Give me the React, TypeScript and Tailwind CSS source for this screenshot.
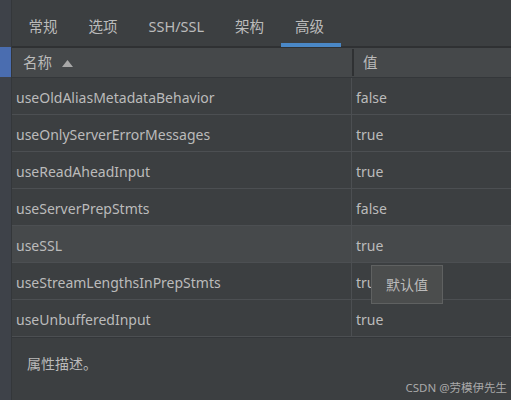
import React from "react";

const rows: [string, string][] = [
  ["useOldAliasMetadataBehavior", "false"],
  ["useOnlyServerErrorMessages", "true"],
  ["useReadAheadInput", "true"],
  ["useServerPrepStmts", "false"],
  ["useSSL", "true"],
  ["useStreamLengthsInPrepStmts", "true"],
  ["useUnbufferedInput", "true"],
];

const tabs = ["常规", "选项", "SSH/SSL", "架构", "高级"];

const font = { fontFamily: '"Noto Sans", "Noto Sans CJK SC", sans-serif' };

export default function App() {
  return (
    <div
      className="w-[511px] h-[400px] flex bg-[#3c3f41] text-[#bbbbbb] overflow-hidden"
      style={font}
    >
      <div className="w-[11px] shrink-0 bg-[#3e4249] flex flex-col">
        <div className="h-[47px]" />
        <div className="h-[30px] bg-[#4a6db0]" />
      </div>
      <div className="flex-1 flex flex-col border-l border-[#34373a] relative">
        <div className="h-[46px] flex items-stretch pl-[1px]">
          {tabs.map((t, i) => (
            <div
              key={t}
              className="px-[15.5px] flex items-center text-[14.5px] relative"
            >
              <span className="mt-[8px]">{t}</span>
              {i === 4 && (
                <div className="absolute left-[1px] right-[-1px] bottom-[-1px] h-[4px] bg-[#4a88c7]" />
              )}
            </div>
          ))}
        </div>
        <div className="h-[2px] bg-[#2f3133]" />
        <div className="h-[30px] flex bg-[#45484a] border-b border-[#34373a]">
          <div className="w-[340px] flex items-center pl-[11px] pt-[1px] gap-[10px] text-[14.5px]">
            <span>名称</span>
            <svg width="11" height="7" viewBox="0 0 11 7">
              <polygon points="5.5,0 11,7 0,7" fill="#a8a8a8" />
            </svg>
          </div>
          <div className="w-[2px] my-[1px] bg-[#2f3133]" />
          <div className="flex-1 flex items-center pl-[9px] pt-[1px] text-[14.5px]">值</div>
        </div>
        {rows.map(([k, v], i) => (
          <div
            key={k}
            className={`h-[37px] flex border-b border-[#4c4f52] text-[14px] ${
              i === 4 ? "bg-[#46494b]" : ""
            }`}
          >
            <div className="w-[340px] flex items-center pl-[4px] pt-[2px] border-r border-[#4c4f52]">
              {k}
            </div>
            <div className="flex-1 flex items-center pl-[4px] pt-[2px]">{v}</div>
          </div>
        ))}
        <div className="h-[1px] bg-[#34373a]" />
        <div className="flex-1 relative">
          <div className="pl-[15px] pt-[15px] text-[14px]">属性描述。</div>
          <div className="absolute right-[4px] bottom-[4px] text-[11.5px] text-[#a9a9a9]">
            CSDN @劳模伊先生
          </div>
        </div>
        <div className="absolute left-[359px] top-[265px] w-[72px] h-[39px] bg-[#4b4d4d] border border-[#5f6161] flex items-center justify-center text-[14px]">
          默认值
        </div>
      </div>
    </div>
  );
}
